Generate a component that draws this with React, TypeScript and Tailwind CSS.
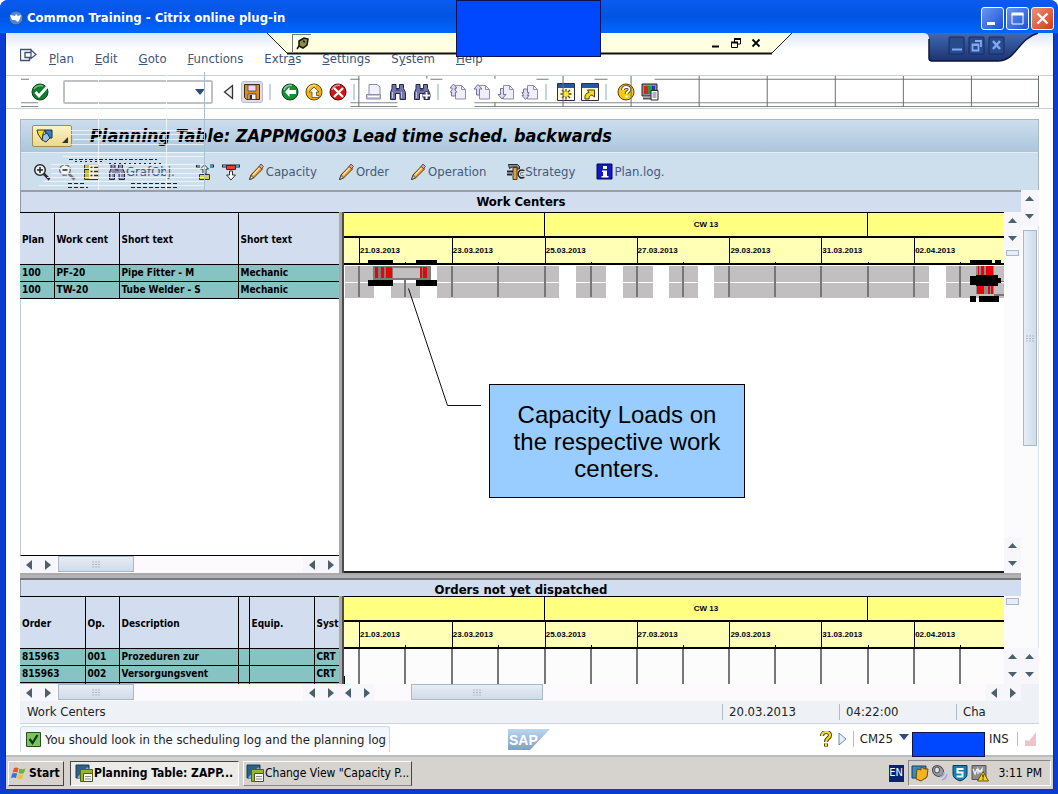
import type { ReactNode } from "react";
import clsx from "clsx";

const menuItems = [
  ["P", "lan"],
  ["E", "dit"],
  ["G", "oto"],
  ["F", "unctions"],
  ["Extr", "a", "s"],
  ["S", "ettings"],
  ["S", "y", "stem"],
  ["H", "elp"],
];

const dayLabels = ["", "21.03.2013", "23.03.2013", "25.03.2013", "27.03.2013", "29.03.2013", "31.03.2013", "02.04.2013"];
const gridLines = [15, 61, 108, 154, 201, 247, 293, 340, 386, 432, 478, 525, 571, 617];

// [x, width] of the working time blocks
const shiftsTop = [[1, 29], [93, 122], [232, 30], [279, 30], [325, 30], [371, 215], [603, 58]];
const shiftsBottom = [[1, 29], [47, 29], [93, 122], [232, 30], [279, 30], [325, 30], [371, 215], [603, 58]];

/* ---------- icons ---------- */

function Icon({ children, label, className }: { children: ReactNode; label?: string; className?: string }) {
  return (
    <svg viewBox="0 0 18 18" className={clsx("h-[18px] w-[18px] shrink-0", className)} aria-label={label} aria-hidden={label ? undefined : true}>
      {children}
    </svg>
  );
}

const CheckIcon = () => (
  <Icon>
    <circle cx="9" cy="9" r="8" fill="#0e7d2c" stroke="#123d1c" />
    <path d="M3 6a7 6 0 0 1 9-3" stroke="#6cc67c" strokeWidth="1.5" fill="none" />
    <path d="M4.500 9l3.500 4 8-9" stroke="#fff" strokeWidth="2.800" fill="none" />
  </Icon>
);

const SaveIcon = () => (
  <Icon>
    <path d="M1.500 1.500h15v15h-13l-2-2z" fill="#d98e1c" stroke="#3d2a10" />
    <path d="M5 2h8v6H5z" fill="#e6dcf0" stroke="#4b3a60" strokeWidth=".8" />
    <path d="M5 11h8v5.500H5z" fill="#f4f0f8" stroke="#3d2a10" strokeWidth=".8" />
    <path d="M6.500 12h2.500v4H6.500z" fill="#3d2a10" />
  </Icon>
);

const RoundIcon = ({ fill, edge, children }: { fill: string; edge: string; children: ReactNode }) => (
  <Icon>
    <circle cx="9" cy="9" r="8" fill={fill} stroke={edge} />
    <path d="M3 7a6.500 6 0 0 1 8-4.500" stroke="#fff" strokeOpacity=".55" strokeWidth="1.500" fill="none" />
    {children}
  </Icon>
);

const PrintIcon = () => (
  <Icon>
    <path d="M4 1.500h8l3 2.500v8H4z" fill="#f2f0fa" stroke="#8f8cae" />
    <path d="M1.500 11.500h14v4.500h-14z" fill="#c9c6e2" stroke="#8f8cae" />
    <path d="M3 13.500h11" stroke="#fff" />
  </Icon>
);

const FindIcon = ({ more, faded }: { more?: boolean; faded?: boolean }) => (
  <Icon>
    <g fill={faded ? "#8d8ba6" : "#7476a8"} stroke="#23264f" strokeWidth="1">
      <path d="M3 1.500h4v4h3.500v-4h4v4l2 4v7h-5.500v-6h-4.500v6H1.500v-7l1.500-4z" />
      <path d="M7 7h3.500" />
    </g>
    <path d="M3.500 9v6M12.500 9v6" stroke="#c2c4e4" />
    {more && <path d="M13.500 8.500v8M9.500 12.500h8" stroke="#23264f" strokeWidth="4" />}
    {more && <path d="M13.500 9v7M10 12.500h7" stroke="#fff" strokeWidth="2" />}
  </Icon>
);

const PageIcon = ({ mode }: { mode: "first" | "prev" | "next" | "last" }) => (
  <Icon>
    <path d="M6.500 2.500h6l4 4v9.500h-10z" fill="#f0eef8" stroke="#8f8cae" />
    <path d="M12.500 2.500v4h4" fill="none" stroke="#8f8cae" />
    <g fill="#dddaf0" stroke="#77749c" strokeWidth="1">
      {mode === "first" && <path d="M4.500 1l3.500 4H6v2l2 2H6.500v4h-4V9H1l2-2V5H1z" />}
      {mode === "prev" && <path d="M5 1.500l4 4.500H6.500v6h-3V6H1z" />}
      {mode === "next" && <path d="M5 16l4-4.500H6.500v-6h-3v6H1z" />}
      {mode === "last" && <path d="M4.500 16.500l3.500-4H6.500l1.500-3H6.500V6h-4v3.500H1l1.500 3H1z" />}
    </g>
  </Icon>
);

const SessionIcon = ({ shortcut }: { shortcut?: boolean }) => (
  <Icon>
    <path d="M.5 .5h17v17H.5z" fill="#fbf7d8" stroke="#26304a" />
    <path d="M1 1h16v4H1z" fill="#2358a8" />
    {shortcut ? (
      <path d="M4 16c-.5-4 1-6 4-6.500L6.500 7h7v7l-2.500-2c-2 0-3 1.500-3 4z" fill="#f5dd1c" stroke="#4a4010" strokeWidth="1" />
    ) : (
      <>
        <path d="M9 6v10.500M3.500 11h11M5 7l8 8M13 7l-8 8" stroke="#5b4a08" strokeWidth="1.300" />
        <circle cx="9" cy="11" r="2.600" fill="#ffe81f" />
      </>
    )}
  </Icon>
);

const HelpIcon = () => (
  <Icon>
    <circle cx="9" cy="9" r="8" fill="#f5c816" stroke="#5a3c08" />
    <path d="M6 7c0-4 6.500-4 6.500-.5C12.500 8.500 9.500 8.500 9.500 11" stroke="#4b3208" strokeWidth="3.600" fill="none" />
    <path d="M6 7c0-4 6.500-4 6.500-.5C12.500 8.500 9.500 8.500 9.500 11M9.500 12.500v2" stroke="#fff" strokeWidth="2" fill="none" />
  </Icon>
);

const LayoutIcon = () => (
  <Icon>
    <path d="M1 1h15v12H1z" fill="#8d8d95" stroke="#25252b" />
    <path d="M3 3h4v8H3z" fill="#e0201e" />
    <path d="M7 3h4v8H7z" fill="#18a338" />
    <path d="M11 3h3v8h-3z" fill="#2233cc" />
    <path d="M2 15.500h8" stroke="#55555c" strokeWidth="2" />
    <path d="M10 7.500h7v9.500h-7z" fill="#fff" stroke="#25252b" />
    <path d="M11.500 10h4M11.500 12h4M11.500 14h4" stroke="#55555c" strokeWidth=".9" />
  </Icon>
);

const ZoomIcon = ({ out }: { out?: boolean }) => (
  <Icon>
    <path d="M10.500 10.500l6 6" stroke={out ? "#777" : "#2a2a2e"} strokeWidth="2.500" />
    <circle cx="7" cy="7" r="5.300" fill="#eef5f5" stroke={out ? "#777" : "#2a2a2e"} strokeWidth="1.500" strokeDasharray={out ? "5 1" : undefined} />
    <path d={out ? "M4.500 7h5" : "M4 7h6M7 4v6"} stroke="#222" strokeWidth="1.500" />
  </Icon>
);

const ListIcon = () => (
  <Icon>
    <path d="M1.500 1.500h14v15h-14z" fill="#f3efd3" stroke="#333" />
    <path d="M2 2h4v14H2z" fill="#c7b64d" />
    <path d="M7.500 4.500h2M11 4.500h4M7.500 8.500h2M11 8.500h4M7.500 12.500h2M11 12.500h4" stroke="#333" strokeWidth="1.500" />
    <path d="M2 6.500h4M2 10.500h4" stroke="#333" />
  </Icon>
);

const DispatchIcon = () => (
  <Icon>
    <path d="M0 3h4M14 3h4" stroke="#222" strokeWidth="3" />
    <path d="M1 3h3M14 3h3" stroke="#3cc4e8" strokeWidth="1.500" />
    <path d="M8.500 2l4 4h-2.500v5h-3V6H4.500z" fill="#fff" stroke="#333" />
    <path d="M3.500 11.500h10v5h-10z" fill="#d7d24a" stroke="#333" />
  </Icon>
);

const DeallocateIcon = () => (
  <Icon>
    <path d="M0 3h18" stroke="#222" strokeWidth="3" />
    <path d="M1 3h3M14 3h3" stroke="#3cc4e8" strokeWidth="1.500" />
    <path d="M4.500 2.500h9v4h-9z" fill="#e2413b" stroke="#6d1410" />
    <path d="M7.500 8h3v4h3L9 17l-4.500-5h3z" fill="#fff" stroke="#333" />
  </Icon>
);

const PencilIcon = () => (
  <Icon>
    <path d="M3 12L11.500 3l3 3-9 9-4 1.500z" fill="#f0a030" stroke="#4a3320" />
    <path d="M5 12l7-7.500" stroke="#ffe2a4" strokeWidth="1.500" />
    <path d="M11 3.500l2-2.500 2.500 2.500-2 2z" fill="#e8a0a0" stroke="#4a3320" strokeWidth=".8" />
    <path d="M3 12.500l2.500 2.500-4 1.500z" fill="#f7e6cc" stroke="#333" strokeWidth=".8" />
  </Icon>
);

const StrategyIcon = () => (
  <Icon>
    <path d="M1.500 1.500h9l2 2v2.500h-2.500v-2h-5l-2.500 1.500z" fill="#8b8f96" stroke="#26262c" />
    <path d="M6 4.500h4v12H6z" fill="#d9a148" stroke="#4d3513" />
    <path d="M0 8.500h6M0 11.500h5" stroke="#26262c" strokeWidth="1.800" />
    <path d="M17 8.500c-3-1.500-5 0-5 2.500s2 4 5 2.500" stroke="#26262c" strokeWidth="3.200" fill="none" />
    <path d="M17 9c-3-1.500-4.500 0-4.500 2s2 3 4.500 2" stroke="#e8e8ec" strokeWidth="1.300" fill="none" />
  </Icon>
);

const InfoIcon = () => (
  <Icon>
    <path d="M1 1h15v15H1z" fill="#1218c8" stroke="#05083f" />
    <path d="M7 3h4v3H7zM6 7.500h5V13h1.500v1.500h-7V13H7V9H6z" fill="#fff" />
  </Icon>
);

const AppIcon = () => (
  <Icon>
    <path d="M1 1h13v13H1z" fill="#2d6288" stroke="#173b55" />
    <path d="M3 14L13 4" stroke="#7fb2d4" strokeWidth="2" />
    <path d="M5.500 5.500h12v4h-8v8h-4z" fill="#9bb52a" stroke="#50611a" />
    <path d="M8.500 9.500h9v8h-9z" fill="#f6f6f0" stroke="#4a5130" />
    <path d="M10 12.500h6M10 15h6" stroke="#8c8c84" />
  </Icon>
);

/* ---------- scroll bars ---------- */

const arrowPaths = {
  left: "M7 0L1 5l6 5z",
  right: "M2 0l6 5-6 5z",
  up: "M0 7l4.500-5L9 7z",
  down: "M0 2l4.500 5L9 2z",
};

function Arrow({ dir }: { dir: keyof typeof arrowPaths }) {
  return (
    <button aria-label={`Scroll ${dir}`} className="flex h-[18px] w-[18px] shrink-0 items-center justify-center bg-[#f7f7fb]">
      <svg viewBox="0 0 9 10" className="h-[10px] w-[9px]">
        <path d={arrowPaths[dir]} fill="#4c6070" />
      </svg>
    </button>
  );
}

function Grip() {
  return (
    <svg viewBox="0 0 8 7" className="h-[7px] w-2">
      <path d="M0 1h2M3 1h2M6 1h2M0 3.500h2M3 3.500h2M6 3.500h2M0 6h2M3 6h2M6 6h2" stroke="#a9b7c5" />
    </svg>
  );
}

function HScroll({ thumb }: { thumb: string }) {
  return (
    <div className="flex h-[17px] w-full bg-[#fcfafd]">
      <Arrow dir="left" />
      <Arrow dir="right" />
      <div className={clsx("flex h-4 items-center justify-center border border-[#a8b8c8] bg-linear-to-b from-[#e6edf5] to-[#cfdce9]", thumb)}>
        <Grip />
      </div>
      <div className="flex-1" />
      <Arrow dir="left" />
      <Arrow dir="right" />
    </div>
  );
}

/* ---------- planning board ---------- */

function TimeScale() {
  return (
    <div className="text-[8px] leading-[10px] font-bold text-black [font-family:'Liberation_Sans',sans-serif]">
      <div className="grid h-[26px] grid-cols-[201fr_324fr_136fr] border-t border-b-2 border-black bg-[#ffff80]">
        <div className="border-r border-black" />
        <div className="flex items-center justify-center border-r border-black">CW 13</div>
        <div />
      </div>
      <div className="grid h-[27px] grid-cols-[15fr_93fr_93fr_92fr_93fr_92fr_93fr_90fr] border-b-2 border-black bg-[#ffffb5]">
        {dayLabels.map((day) => (
          <div key={day} className={clsx("flex items-center", day && "border-l border-black")}>
            {day}
          </div>
        ))}
      </div>
    </div>
  );
}

function CapacityChart() {
  return (
    <svg viewBox="0 0 661 33" preserveAspectRatio="none" className="block h-[33px] w-full overflow-visible" shapeRendering="crispEdges">
      {shiftsTop.map(([x, w]) => (
        <rect key={x} x={x} y="1" width={w} height="16" fill="#c1bfc0" />
      ))}
      {shiftsBottom.map(([x, w]) => (
        <rect key={x} x={x} y="18" width={w} height="15" fill="#c1bfc0" />
      ))}
      {gridLines.map((x) => (
        <g key={x}>
          <rect x={x - 1} y="1" width="2" height="31" fill="#777" />
          <rect x={x} y="-3" width="1" height="3" fill="#000" />
        </g>
      ))}
      {/* load on the pipe fitter */}
      <rect x="29" y="1" width="58" height="14" fill="#7c7c7c" />
      <rect x="49" y="3" width="27" height="10" fill="#c1bfc0" />
      <path d="M31 2h3v11h-3zM37 2h3v11h-3zM42 2h6v11h-6zM76 2h2v11h-2zM79 2h4v11h-4z" fill="#f00000" />
      <path d="M24-5h25v5H24zM72-5h21v5H72zM24 15h25v6H24zM72 15h21v6H72z" />
      {/* load at the end of the horizon */}
      <rect x="633" y="1" width="18" height="28" fill="#8c8a8a" />
      <path d="M635 1h1v12h-1zM638 1h3v12h-3zM643 1h7v12h-7zM634 20h7v9h-7zM645 20h2v9h-2zM648 20h2v9h-2z" fill="#f00000" />
      <path d="M651 16h10v1h-10zM651 29h10v2h-10z" fill="#777" />
      <path d="M627-5h22v4h-22zM652-5h6v4h-6zM627 11h6v-1h22v3h3v5h-3v3h-22v-1h-6zM627 31h6v6h-6zM636 31h20v6h-20z" />
    </svg>
  );
}

function OrderGrid() {
  return (
    <svg viewBox="0 0 661 35" preserveAspectRatio="none" className="block h-[35px] w-full overflow-visible" shapeRendering="crispEdges">
      {gridLines.map((x) => (
        <g key={x}>
          <rect x={x - 1} y="0" width="2" height="35" fill="#777" />
          <rect x={x} y="-4" width="1" height="3" fill="#000" />
        </g>
      ))}
      <path d="M0 27h1v8h-1z" />
    </svg>
  );
}

function PlanTable({ label, cols, head, rows }: { label: string; cols: string[]; head: string[]; rows: string[][] }) {
  return (
    <table aria-label={label} className="w-[319px] table-fixed border-collapse text-[10px] leading-[14px] font-bold text-black">
      <colgroup>
        {cols.map((c, i) => (
          <col key={i} className={c} />
        ))}
      </colgroup>
      <thead>
        <tr className="h-[52px] bg-[#d2deef]">
          {head.map((h, i) => (
            <th key={i} className="border-t border-r border-black p-0 pt-0.5 pl-0.5 text-left align-middle whitespace-nowrap last:border-r-0">
              {h}
            </th>
          ))}
        </tr>
      </thead>
      <tbody>
        {rows.map((row, r) => (
          <tr key={r} className="h-[17px] bg-[#87c3c2]">
            {row.map((cell, i) => (
              <td key={i} className="border-y border-r border-black p-0 pl-0.5 whitespace-nowrap last:border-r-0">
                {cell}
              </td>
            ))}
          </tr>
        ))}
      </tbody>
    </table>
  );
}

/* ---------- bars ---------- */

const Divider = () => <div className="mr-[10px] h-4 w-0.5 bg-[#c3d5e8]" />;

function TextButton({ icon, children }: { icon: ReactNode; children: ReactNode }) {
  return (
    <button className="flex items-center">
      {icon}
      {children}
    </button>
  );
}

function ToolButton({ label, children }: { label: string; children: ReactNode }) {
  return (
    <button aria-label={label} className="shrink-0">
      {children}
    </button>
  );
}

function TitleBar() {
  return (
    <header className="flex h-[33px] items-center rounded-t-lg bg-linear-to-b from-[#0a5cf0] via-[#0054e3] to-[#0066ff] pt-[3px] pr-1 pl-2">
      <svg viewBox="0 0 16 16" className="h-4 w-4" aria-hidden>
        <circle cx="8" cy="8" r="7" fill="#4c86d8" stroke="#1d4ea8" />
        <path d="M2 5l5 1 1-2 2 2 3-1-1 4-2 3-3-2-3 0z" fill="#fff" />
      </svg>
      <h1 className="ml-[3px] flex-1 text-[13px] font-bold text-white">Common Training - Citrix online plug-in</h1>
      <div className="flex gap-[2px]">
        <button aria-label="Minimize" className="h-[23px] w-[23px] rounded-[3px] border border-white bg-linear-to-br from-[#6a95f0] to-[#1a50d8]">
          <svg viewBox="0 0 21 21">
            <path d="M5 14h8v3H5z" fill="#fff" />
          </svg>
        </button>
        <button aria-label="Maximize" className="h-[23px] w-[23px] rounded-[3px] border border-white bg-linear-to-br from-[#6a95f0] to-[#1a50d8]">
          <svg viewBox="0 0 21 21">
            <path d="M5 6h11v10H5z" fill="none" stroke="#fff" />
            <path d="M4.500 4.500h12v3h-12z" fill="#fff" />
          </svg>
        </button>
        <button aria-label="Close" className="h-[23px] w-[23px] rounded-[3px] border border-white bg-linear-to-br from-[#ee9070] to-[#cc3a14]">
          <svg viewBox="0 0 21 21">
            <path d="M5.500 5.500l10 10M15.500 5.500l-10 10" stroke="#fff" strokeWidth="2.400" />
          </svg>
        </button>
      </div>
    </header>
  );
}

function SessionBar() {
  return (
    <div className="absolute top-[33px] left-[267px] h-[22px] w-[525px]">
      <svg viewBox="0 0 525 22" className="absolute inset-0 h-full w-full" aria-hidden>
        <path d="M0 0l21 21h483L525 0z" fill="#ffffe1" />
        <path d="M0 0l21 21M504 21L525 0" stroke="#222" fill="none" />
        <path d="M20 20.500h485" stroke="#111" strokeWidth="2" />
      </svg>
      <div className="relative flex h-[19px] items-center pr-[31px] pl-[25px]">
        <button aria-label="Pin" className="h-[18px] w-[19px] border-t border-l border-[#777]">
          <svg viewBox="0 0 18 17">
            <path d="M6 6l5-3 4 1-1 6-4 3-4-2z" fill="#8f8f40" stroke="#111" strokeWidth="1.500" />
            <path d="M6 11l-2 3M10 6l2 1" stroke="#111" strokeWidth="1.500" />
          </svg>
        </button>
        <div className="flex-1" />
        <div className="flex gap-[10px]">
          <button aria-label="Minimize session">
            <svg viewBox="0 0 10 10" className="h-[10px] w-[10px]">
              <path d="M1 8.500h7" stroke="#000" strokeWidth="2" />
            </svg>
          </button>
          <button aria-label="Restore session">
            <svg viewBox="0 0 10 10" className="h-[10px] w-[10px]">
              <path d="M3.500 4V1h6v5H7M.5 4.500h6v5h-6z" fill="none" stroke="#000" />
              <path d="M3 1h7M0 4.500h7" stroke="#000" strokeWidth="2" />
            </svg>
          </button>
          <button aria-label="Close session">
            <svg viewBox="0 0 10 10" className="h-[10px] w-[10px]">
              <path d="M1.500 1.500l7 7M8.500 1.500l-7 7" stroke="#000" strokeWidth="1.800" />
            </svg>
          </button>
        </div>
      </div>
    </div>
  );
}

function WindowTab() {
  return (
    <div className="absolute top-[33px] right-[15px] h-[31px] w-[120px]">
      <svg viewBox="0 0 120 31" className="h-full w-full" aria-hidden>
        <defs>
          <linearGradient id="tab" x2="0" y2="1">
            <stop offset="0" stopColor="#3f6ab4" />
            <stop offset="1" stopColor="#1c3370" />
          </linearGradient>
        </defs>
        <path d="M0 0c4 0 6 2 6 6v19q0 3 3 3h66c18 0 20-22 40-28z" fill="url(#tab)" />
        <path d="M6 6v19q0 3 3 3h66c18 0 20-22 40-28" fill="none" stroke="#0c1738" strokeWidth="1.500" />
        <g fill="#2a4a90" stroke="#142a60">
          <rect x="26" y="4" width="15" height="17" rx="1" />
          <rect x="46" y="4" width="15" height="17" rx="1" />
          <rect x="66" y="4" width="15" height="17" rx="1" />
        </g>
        <g stroke="#83a8ec" fill="none">
          <path d="M29 16.500h10" strokeWidth="2" />
          <path d="M52 8h6v6M49.500 11.500h6v6h-6zM49 12h7" strokeWidth="1.800" />
          <path d="M70 8l7 8M77 8l-7 8" strokeWidth="2.500" />
        </g>
      </svg>
    </div>
  );
}

function MenuBar() {
  return (
    <nav className="flex h-[42px] items-center gap-[21px] bg-linear-to-b from-[#dfe6f4] via-white via-40% to-white pt-2.5 pl-3.5 text-[#3d5578]">
      <svg viewBox="0 0 18 14" className="-mr-2.5 mb-2 h-[14px] w-[18px]" aria-hidden>
        <path d="M11.500 1.500h-11v11h9V10M12 4.500H5v5h6" fill="none" stroke="#3d4f74" strokeWidth="1.300" />
        <path d="M11 2l5 4.500-5 4z" fill="#fff" stroke="#3d4f74" strokeWidth="1.200" />
      </svg>
      {menuItems.map(([a, b, c]) => (
        <button key={a + b}>
          {c ? (
            <>
              {a}
              <u>{b}</u>
              {c}
            </>
          ) : (
            <>
              <u>{a}</u>
              {b}
            </>
          )}
        </button>
      ))}
    </nav>
  );
}

function StandardToolbar() {
  return (
    <div className="relative flex h-[34px] items-center gap-1.5 border-y border-[#c9d0da] bg-white pl-[25px]">
      <ToolButton label="Enter">
        <CheckIcon />
      </ToolButton>
      <div className="ml-2 flex h-[24px] w-[150px] items-center rounded-[2px] border-2 border-[#bfc1c4] bg-white pr-1.5">
        <input aria-label="Command" className="w-full min-w-0 flex-1 outline-none" />
        <button aria-label="Command history">
          <svg viewBox="0 0 10 6" className="h-[6px] w-[10px]">
            <path d="M0 0h10L5 6z" fill="#2c4a7c" />
          </svg>
        </button>
      </div>
      <button aria-label="Hide command field" className="ml-1">
        <svg viewBox="0 0 12 16" className="h-4 w-3">
          <path d="M9.500 1.500v13L1.500 8z" fill="#f0f0f4" stroke="#333" strokeWidth="1.300" />
        </svg>
      </button>
      <button aria-label="Save" className="rounded-[3px] border border-[#b9b9cf] bg-[#dddcea] p-px">
        <SaveIcon />
      </button>
      <div className="mr-1 h-4 w-0.5 bg-[#c3d5e8]" />
      <div className="flex items-center gap-1.5">
        <ToolButton label="Back">
          <RoundIcon fill="#159033" edge="#0b3d17">
            <path d="M8.500 4L4 9l4.500 5v-3H15V7H8.500z" fill="#fff" />
          </RoundIcon>
        </ToolButton>
        <ToolButton label="Exit">
          <RoundIcon fill="#f0b414" edge="#6a4606">
            <path d="M9 4l5 5h-2.500v3.500H14v2H7V9H4z" fill="#fff" stroke="#6a4606" strokeWidth=".8" />
          </RoundIcon>
        </ToolButton>
        <ToolButton label="Cancel">
          <RoundIcon fill="#cf1414" edge="#5c0808">
            <path d="M5 5l9 9M14 5l-9 9" stroke="#fff" strokeWidth="2.400" />
          </RoundIcon>
        </ToolButton>
        <Divider />
      </div>
      <div className="-ml-1.5 flex items-center gap-1.5">
        <ToolButton label="Print"><PrintIcon /></ToolButton>
        <ToolButton label="Find"><FindIcon /></ToolButton>
        <ToolButton label="Find next"><FindIcon more /></ToolButton>
        <Divider />
      </div>
      <div className="-ml-1.5 flex items-center gap-1.5">
        <ToolButton label="First page"><PageIcon mode="first" /></ToolButton>
        <ToolButton label="Previous page"><PageIcon mode="prev" /></ToolButton>
        <ToolButton label="Next page"><PageIcon mode="next" /></ToolButton>
        <ToolButton label="Last page"><PageIcon mode="last" /></ToolButton>
        <Divider />
      </div>
      <div className="-ml-1.5 flex items-center gap-1.5">
        <ToolButton label="New session"><SessionIcon /></ToolButton>
        <ToolButton label="Create shortcut"><SessionIcon shortcut /></ToolButton>
        <Divider />
      </div>
      <div className="-ml-1.5 flex items-center gap-1.5">
        <ToolButton label="Help"><HelpIcon /></ToolButton>
        <ToolButton label="Customize layout"><LayoutIcon /></ToolButton>
      </div>
      <svg viewBox="0 0 1046 34" preserveAspectRatio="none" className="pointer-events-none absolute inset-0 h-full w-full" shapeRendering="crispEdges" aria-hidden>
        <path d="M15 3.500h8M344 3.500h9M424 3.500h12M530 3.500h12M588 3.500h13M648 3.500h384" stroke="#777c7c" />
        <path d="M15 28.500h17M15 32.500h17M344 28.500h47M344 32.500h47M468 28.500h564M468 32.500h564" stroke="#858b8b" />
        <path d="M352.500 0v33M420.500 0v3M488.500 0v3M488.500 28v5M556.500 0v33M624.500 0v33M692.500 0v33M760.500 0v33M828.500 0v33M896.500 0v33M964.500 0v33M1031.500 0v33" stroke="#6c7172" />
      </svg>
    </div>
  );
}

function PlanningHeader() {
  return (
    <div className="relative border-t border-r border-l border-[#a3b7c7] bg-[#cddeed]">
      <div className="flex h-[33px] items-center border-b border-[#e4eef7] bg-linear-to-b from-[#cddeed] to-[#abc6dc] pl-[11px]">
        <button aria-label="Services for object" className="flex h-[22px] w-10 items-center rounded-[2px] border border-[#a08c50] bg-linear-to-b from-[#fdf3c4] to-[#ecd98c] pl-0.5">
          <Icon className="w-5">
            <path d="M2 3h8l-2 4-1 6-4-6z" fill="#f0e020" stroke="#333" />
            <path d="M10 3h7v8h-5z" fill="#2d7fd4" stroke="#16304f" />
            <path d="M8 8l4-2 3 5-4 4-4-2z" fill="#9fc4e0" stroke="#333" />
          </Icon>
          <svg viewBox="0 0 10 16" className="ml-1.5 h-4 w-[10px]">
            <path d="M9 9v6H3z" fill="#333" />
          </svg>
        </button>
        <h2 className="ml-[18px] text-[18px] leading-5 font-bold text-black italic">Planning Table: ZAPPMG003 Lead time sched. backwards</h2>
      </div>
      <div className="flex h-[37px] items-center gap-[21px] pl-3 text-[#44597d]">
        <div className="flex items-center gap-[7px]">
          <ToolButton label="Zoom in"><ZoomIcon /></ToolButton>
          <ToolButton label="Zoom out"><ZoomIcon out /></ToolButton>
          <ToolButton label="List"><ListIcon /></ToolButton>
          <TextButton icon={<FindIcon faded />}>GrafObj.</TextButton>
        </div>
        <div className="flex items-center gap-2">
          <ToolButton label="Dispatch"><DispatchIcon /></ToolButton>
          <ToolButton label="Deallocate"><DeallocateIcon /></ToolButton>
          <TextButton icon={<PencilIcon />}>Capacity</TextButton>
        </div>
        <TextButton icon={<PencilIcon />}>Order</TextButton>
        <TextButton icon={<PencilIcon />}>Operation</TextButton>
        <TextButton icon={<StrategyIcon />}>Strategy</TextButton>
        <TextButton icon={<InfoIcon />}>Plan.log.</TextButton>
      </div>
      {/* leftover repaint streaks above the tool icons */}
      <svg viewBox="0 0 186 118" className="pointer-events-none absolute -top-12 left-0 h-[118px] w-[186px]" shapeRendering="crispEdges" aria-hidden>
        <path d="M183.500 0v118" stroke="#a9c0d4" />
        <path d="M77.500 2v116M145.500 2v116" stroke="#fff" strokeOpacity=".7" />
        <path d="M50 58.500h133M50 62.500h133M52 67.500h131M50 72.500h133M46 80.500h137M42 84.500h141M30 92.500h153M30 96.500h153M30 101.500h153M26 105.500h157M22 109.500h161M18 113.500h165" stroke="#f4f8fc" strokeOpacity=".8" />
        <path d="M48 87.500h90" stroke="#222" strokeDasharray="4 2 2 2" />
        <path d="M54 89.500h30M88 91.500h52" stroke="#222" strokeDasharray="2 3" />
        <path d="M47 111.500h18M47 115.500h20M110 111.500h46M110 115.500h46" stroke="#222" strokeDasharray="4 2" />
      </svg>
    </div>
  );
}

function Callout() {
  return (
    <div className="absolute top-[119px] left-[145px] flex h-[114px] w-[256px] items-center justify-center border border-black bg-[#99ccff] px-5 text-center text-[24px] leading-[27px] text-black [font-family:'Liberation_Sans',sans-serif]">
      Capacity Loads on the respective work centers.
    </div>
  );
}

function PaneTitle({ children, className }: { children: ReactNode; className: string }) {
  return (
    <h3 className={clsx("overflow-hidden border-l border-[#8d99a6] bg-[#d2deef] text-center text-[13px] leading-5 font-bold text-black", className)}>
      {children}
    </h3>
  );
}

function PlanningBoard() {
  return (
    <div className="flex flex-1">
      <div className="flex min-w-0 flex-1 flex-col">
        <div className="h-0.5 bg-[#9a9ea6]" />
        <PaneTitle className="h-5">Work Centers</PaneTitle>
        <div className="flex flex-1">
          <div className="flex w-[319px] flex-col">
            <PlanTable
              label="Work Centers"
              cols={["w-[34px]", "w-[65px]", "w-[119px]", "w-[101px]"]}
              head={["Plan", "Work cent", "Short text", "Short text"]}
              rows={[
                ["100", "PF-20", "Pipe Fitter - M", "Mechanic"],
                ["100", "TW-20", "Tube Welder - S", "Mechanic"],
              ]}
            />
            <div className="flex-1 border-b border-l border-b-black border-l-[#c4ccd6]" />
            <HScroll thumb="ml-0.5 w-[76px]" />
          </div>
          <div className="w-[5px] border-r-2 border-[#4c4c4c] bg-[#a9a9ab]" />
          <div className="relative min-w-0 flex-1 border-b-2 border-[#222] bg-white">
            <TimeScale />
            <CapacityChart />
            <div className="absolute top-[53px] left-0">
              <svg viewBox="0 0 140 145" className="absolute top-0 left-0 h-[145px] w-[140px]" aria-hidden>
                <path d="M64.500 23.500l39 117H137" fill="none" stroke="#111" />
              </svg>
              <Callout />
            </div>
          </div>
          <div className="flex w-[17px] flex-col items-center bg-[#fbfafd]">
            <Arrow dir="up" />
            <Arrow dir="down" />
            <div className="mt-0.5 h-[6px] w-[13px] border border-[#a8b8c8] bg-[#e6edf5]" />
            <div className="flex-1" />
            <Arrow dir="up" />
            <Arrow dir="down" />
          </div>
        </div>
        <div className="h-[7px] border-y-2 border-t-[#aaa] border-b-[#787878] bg-[#b4b2b4]" />
        <PaneTitle className="h-4">Orders not yet dispatched</PaneTitle>
        <div className="flex h-[88px]">
          <div className="w-[319px] overflow-hidden bg-[#87c3c2]">
            <PlanTable
              label="Orders not yet dispatched"
              cols={["w-[65px]", "w-[34px]", "w-[119px]", "w-[11px]", "w-[65px]", "w-[25px]"]}
              head={["Order", "Op.", "Description", "", "Equip.", "Syst"]}
              rows={[
                ["815963", "001", "Prozeduren zur", "", "", "CRT"],
                ["815963", "002", "Versorgungsvent", "", "", "CRT"],
                ["", "", "", "", "", ""],
              ]}
            />
          </div>
          <div className="w-[5px] border-r-2 border-[#4c4c4c] bg-[#a9a9ab]" />
          <div className="min-w-0 flex-1 bg-[#fdfcfd]">
            <TimeScale />
            <OrderGrid />
          </div>
          <div className="flex w-[17px] flex-col items-center bg-[#fbfafd] pt-0.5">
            <div className="h-[7px] w-[13px] border border-[#a8b8c8] bg-[#e6edf5]" />
            <div className="flex-1" />
            <Arrow dir="up" />
            <Arrow dir="down" />
          </div>
        </div>
      </div>
      <div className="flex w-[18px] flex-col items-center border-r border-[#dde2ea] bg-[#fbfafd]">
        <Arrow dir="up" />
        <Arrow dir="down" />
        <div className="mt-1 flex h-[216px] w-[14px] items-center justify-center border border-[#a8b8c8] bg-linear-to-r from-[#e6edf5] to-[#cfdce9]">
          <Grip />
        </div>
        <div className="flex-1" />
        <Arrow dir="up" />
        <Arrow dir="down" />
      </div>
    </div>
  );
}

function StatusRow() {
  return (
    <div className="flex h-[23px] items-center border-b border-[#ccd5df] bg-[#eef2f6] pl-[7px] text-[#222]">
      <span className="flex-1">Work Centers</span>
      <span className="w-[117px] border-l border-[#b4bcc6] pl-1.5">20.03.2013</span>
      <span className="w-[117px] border-l border-[#b4bcc6] pl-1.5">04:22:00</span>
      <span className="w-[83px] border-l border-[#b4bcc6] pl-1.5">Cha</span>
    </div>
  );
}

function MessageBar() {
  return (
    <div className="mt-0.5 mb-[3px] flex h-[26px] items-center text-[#222]">
      <div className="flex h-full w-[370px] items-center rounded-t-[3px] border-x border-t border-[#cdd9e6] bg-linear-to-b from-[#eff5fc] to-white pl-[5px]">
        <svg viewBox="0 0 15 15" className="h-[15px] w-[15px] shrink-0" aria-hidden>
          <path d="M.5.5h14v14H.5z" fill="#79c45c" stroke="#2b4d26" />
          <path d="M3.500 7l3 4 5-8" fill="none" stroke="#12351a" strokeWidth="2.200" />
        </svg>
        <span className="ml-1 whitespace-nowrap">You should look in the scheduling log and the planning log</span>
      </div>
      <svg viewBox="0 0 42 21" className="ml-[118px] h-[21px] w-[42px]">
        <defs>
          <linearGradient id="sap" x2="0" y2="1">
            <stop offset="0" stopColor="#bcd6ee" />
            <stop offset="1" stopColor="#7d9fc8" />
          </linearGradient>
        </defs>
        <path d="M0 0h42L22 21H0z" fill="url(#sap)" />
        <text x="1" y="16" fontFamily="Liberation Sans, sans-serif" fontWeight="700" fontSize="14" fill="#fff">SAP</text>
      </svg>
      <div className="flex-1" />
      <div className="flex items-center">
        <svg viewBox="0 0 12 16" className="h-4 w-3" aria-label="Help">
          <path d="M2 5c0-5 8-5 8-1S6 6.500 6 11M6 12.500v3" fill="none" stroke="#2a2608" strokeWidth="4" />
          <path d="M2 5c0-5 8-5 8-1S6 6.500 6 11M6 12.500v2.500" fill="none" stroke="#f2dc18" strokeWidth="2.400" />
        </svg>
        <svg viewBox="0 0 9 14" className="ml-1.5 h-[14px] w-[9px]" aria-hidden>
          <path d="M1 1l7 6-7 6z" fill="#e4eef8" stroke="#7089a4" />
        </svg>
        <button className="ml-1.5 flex items-center gap-1.5 border-l border-[#b4bcc6] pl-1.5">
          CM25
          <svg viewBox="0 0 10 6" className="mb-1 h-[6px] w-[10px]">
            <path d="M0 0h10L5 6z" fill="#2c4a7c" />
          </svg>
        </button>
        <div className="relative z-10 mt-[11px] mr-1 ml-[3px] h-[25px] w-[73px] border border-[#0a1450] bg-[#0048ff]" />
        <span className="w-7">INS</span>
        <svg viewBox="0 0 22 16" className="h-4 w-[22px]" aria-hidden>
          <path d="M.5 1v14" stroke="#b4bcc6" />
          <path d="M8 15V9l4 1 7-9v14z" fill="#eec4c8" />
        </svg>
      </div>
    </div>
  );
}

function Taskbar() {
  return (
    <footer className="flex h-[34px] items-center border-t-2 border-[#b9bcc4] bg-[#d6d3ce] px-0.5 text-xs text-black">
      <button className="flex h-[25px] w-[56px] items-center gap-0.5 border border-t-white border-r-[#444] border-b-[#444] border-l-white pl-0.5 font-bold">
        <svg viewBox="0 0 16 16" className="h-4 w-4" aria-hidden>
          <path d="M3 3q2-1 4.500 0L6.500 7.500Q4 6.500 1.500 7.500z" fill="#e8542c" />
          <path d="M8.500 3.500q3 1.500 6 0l-1.500 4.500q-3 1.500-5.500 0z" fill="#6cb33c" />
          <path d="M1.200 8.500q2.500-1 5 0L5 13q-2.500-1-5 0z" fill="#3c70d4" />
          <path d="M7.200 9q3 1.500 5.500 0l-1.500 4.500q-2.500 1.500-5.200 0z" fill="#f4c22c" />
        </svg>
        Start
      </button>
      <button className="ml-1.5 flex h-[25px] w-[169px] items-center gap-px border border-t-[#444] border-r-white border-b-white border-l-[#444] bg-[#ecebe8] pl-1 font-bold whitespace-nowrap">
        <AppIcon />
        Planning Table: ZAPP...
      </button>
      <button className="ml-1 flex h-[25px] w-[169px] items-center gap-px border border-t-white border-r-[#444] border-b-[#888] border-l-white pl-0.5 whitespace-nowrap">
        <AppIcon />
        Change View "Capacity P...
      </button>
      <div className="flex-1" />
      <span className="mr-1 flex h-[17px] w-[15px] items-center justify-center bg-[#0a246a] text-[11px] text-white">EN</span>
      <div className="flex h-[26px] items-center gap-[2px] border border-t-[#888] border-r-white border-b-white border-l-[#888] pr-2 pl-0.5">
        <Icon>
          <path d="M1 2h14v12H1z" fill="#3c88c4" stroke="#1c3c5c" />
          <path d="M6 5l4 1V3l4 2 3 0-1 8-6 4-5-2z" fill="#f4b41c" stroke="#6a4a08" />
        </Icon>
        <Icon>
          <ellipse cx="7" cy="7" rx="6" ry="5" transform="rotate(40 7 7)" fill="#9a9a9e" stroke="#4c4c50" />
          <ellipse cx="6" cy="6" rx="2.500" ry="3" fill="#e4e4e8" stroke="#4c4c50" />
          <path d="M11 16q4-1 5-6M9 13q4-1 4-5" fill="none" stroke="#a4a4e4" strokeWidth="1.500" />
        </Icon>
        <Icon>
          <path d="M2 1.500h14v9q0 4-7 6.500-7-2.500-7-6.500z" fill="#1480b4" stroke="#0c3c5c" />
          <path d="M12.500 5H6.500v3.500h5v4H5.500" fill="none" stroke="#fff" strokeWidth="2" />
        </Icon>
        <Icon>
          <path d="M1 1.500h14v14H1z" fill="#8c8c90" stroke="#55555a" />
          <path d="M2 5l2 5 2-5M7 10V5l2 3 2-3v5" fill="none" stroke="#f4f4f4" strokeWidth="1.300" />
          <path d="M12 7.500l5.500 9.500h-11z" fill="#f8d41c" stroke="#6a5408" />
          <path d="M12 10.500v3M12 14.500v1.200" stroke="#222" strokeWidth="1.300" />
        </Icon>
        <span className="ml-2">3:11 PM</span>
      </div>
    </footer>
  );
}

export default function App() {
  return (
    <div className="relative flex min-h-screen flex-col rounded-t-lg bg-[#0a3cd0] text-[13px] leading-4 [font-family:'DejaVu_Sans_Condensed','DejaVu_Sans',sans-serif]">
      <TitleBar />
      <main className="mr-1 mb-[5px] ml-[5px] flex flex-1 flex-col border-x border-[#1c2f70] bg-white">
        <MenuBar />
        <StandardToolbar />
        <div className="mt-2.5 mr-3.5 ml-3.5 flex flex-1 flex-col">
          <PlanningHeader />
          <PlanningBoard />
          <div className="flex bg-[#eef2f6] pr-[18px]">
            <div className="w-[319px] shrink-0">
              <HScroll thumb="ml-0.5 w-[76px]" />
            </div>
            <HScroll thumb="ml-9 w-[132px]" />
          </div>
          <StatusRow />
          <MessageBar />
        </div>
        <Taskbar />
      </main>
      <SessionBar />
      <WindowTab />
      <div className="absolute top-0 left-[456px] h-[57px] w-[145px] border border-[#0a1450] bg-[#0048ff]" />
    </div>
  );
}
